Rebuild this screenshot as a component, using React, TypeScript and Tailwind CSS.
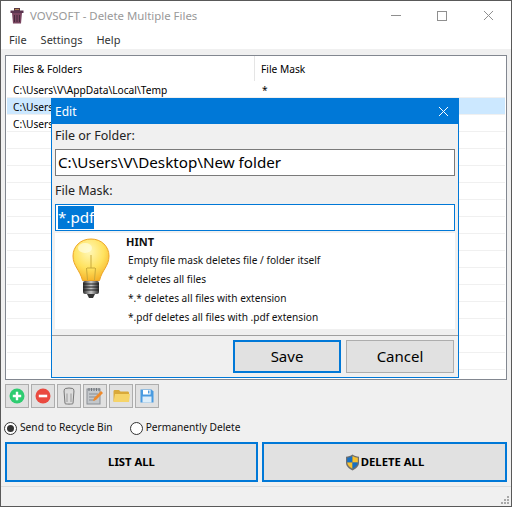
import { X } from "lucide-react";

const rows = [
  { path: "C:\\Users\\V\\AppData\\Local\\Temp", mask: "*" },
  { path: "C:\\Users\\", mask: "", selected: true },
  { path: "C:\\Users\\", mask: "" },
  { path: "", mask: "" },
  { path: "", mask: "" },
];

const hints = [
  "Empty file mask deletes file / folder itself",
  "* deletes all files",
  "*.* deletes all files with extension",
  "*.pdf deletes all files with .pdf extension",
];

const TrashLogo = () => (
  <svg width="14" height="16" viewBox="0 0 14 16">
    <rect x="4.5" y="0.5" width="5" height="2" fill="#b9894f" stroke="#5a3a45" strokeWidth="1" />
    <rect x="0.5" y="2.5" width="13" height="2.5" fill="#5b3550" />
    <path d="M2 5h10l-1 10.5H3z" fill="#7a4560" />
    <path d="M4.5 7v7M7 7v7M9.5 7v7" stroke="#43283c" strokeWidth="1" />
  </svg>
);

const AddIcon = () => (
  <svg width="16" height="16" viewBox="0 0 16 16">
    <circle cx="8" cy="8" r="7.5" fill="#2ecc71" />
    <path d="M8 3.800v8.400M3.800 8h8.400" stroke="#fff" strokeWidth="2.400" />
  </svg>
);

const RemoveIcon = () => (
  <svg width="16" height="16" viewBox="0 0 16 16">
    <circle cx="8" cy="8" r="7.5" fill="#ea4a40" />
    <path d="M3.800 8h8.400" stroke="#fff" strokeWidth="2.600" />
  </svg>
);

const BinIcon = () => (
  <svg width="12" height="18" viewBox="0 0 12 18">
    <ellipse cx="6" cy="3" rx="5" ry="2" fill="#d8d8d8" stroke="#777" />
    <path d="M1 3.500l1 13c0 .8 8 .8 8 0l1-13" fill="#dcdcdc" stroke="#777" />
    <path d="M4 6.500v8.500M8 6.500v8.500" stroke="#999" />
  </svg>
);

const NotesIcon = () => (
  <svg width="18" height="18" viewBox="0 0 18 18">
    <rect x="1" y="2" width="13" height="15" fill="#c4c8cc" stroke="#8b9096" />
    <path d="M3 1v3M5.500 1v3M8 1v3M10.500 1v3M13 1v3" stroke="#6f747a" />
    <path d="M3 7h9M3 10h7M3 13h6" stroke="#868c93" />
    <path d="M7 14l1-3 7-7 2 2-7 7z" fill="#ee8a2c" />
  </svg>
);

const FolderIcon = () => (
  <svg width="17" height="14" viewBox="0 0 17 14">
    <path d="M0.500 2.500c0-1 .5-1.500 1.500-1.500h4l1.500 1.500h7c1 0 1.500.5 1.500 1.500v8.500H.5z" fill="#d9a93a" />
    <path d="M0.500 13l1.500-8h15l-1 8z" fill="#f6d469" />
  </svg>
);

const SaveIcon = () => (
  <svg width="14" height="14" viewBox="0 0 14 14">
    <path d="M.5.5h11l2 2v11H.5z" fill="#4a9be0" />
    <rect x="3" y="1" width="7.500" height="4.500" fill="#ffffff" />
    <rect x="8" y="1.500" width="1.500" height="3" fill="#4a9be0" />
    <rect x="2.500" y="7.500" width="9" height="6" fill="#ddeefa" />
  </svg>
);

const ShieldIcon = () => (
  <svg width="15" height="17" viewBox="0 0 15 17">
    <path d="M7.500.5c2 1.500 4 2 6.500 2.200v6c0 3.500-3 6-6.500 7.800C4 14.700 1 12.200 1 8.700v-6C3.500 2.500 5.500 2 7.500.5z" fill="#6e6e6e" />
    <path d="M7.500 2C5.800 3 4 3.500 2.200 3.700v4.800h5.300z" fill="#1670c4" />
    <path d="M7.500 2c1.700 1 3.500 1.500 5.300 1.700v4.800H7.500z" fill="#f8c22f" />
    <path d="M2.200 8.500h5.300v6.300c-2.700-1.400-5-3.500-5.300-6.300z" fill="#f8c22f" />
    <path d="M12.800 8.500H7.500v6.300c2.700-1.400 5-3.500 5.300-6.300z" fill="#1670c4" />
  </svg>
);

const Bulb = () => (
  <svg width="38" height="63" viewBox="0 0 38 63">
    <defs>
      <radialGradient id="glass" cx="0.45" cy="0.3" r="0.75">
        <stop offset="0" stopColor="#fff8b8" />
        <stop offset="0.55" stopColor="#ffe25e" />
        <stop offset="1" stopColor="#f5ae24" />
      </radialGradient>
      <linearGradient id="screw" x1="0" x2="1" y1="0" y2="0">
        <stop offset="0" stopColor="#2c2c2c" />
        <stop offset="0.5" stopColor="#c9c9c9" />
        <stop offset="1" stopColor="#2c2c2c" />
      </linearGradient>
    </defs>
    <path d="M19 1C8.500 1 1 8.500 1 18c0 10 7 14 9.500 24.500h17C30 32 37 28 37 18 37 8.500 29.500 1 19 1z" fill="url(#glass)" stroke="#eda526" strokeWidth="1" />
    <ellipse cx="13" cy="10" rx="7" ry="5" fill="#fffde0" opacity="0.7" />
    <path d="M19 17v13M15 30h8M14.500 30l1 12M23.500 30l-1 12" stroke="#c9a93a" strokeWidth="1" fill="none" />
    <rect x="11" y="43" width="16" height="13" rx="2" fill="url(#screw)" />
    <path d="M11 46h16M11 49h16M11 52h16" stroke="#1d1d1d" strokeWidth="1" />
    <path d="M15 56h8l-2 4h-4z" fill="#333" />
  </svg>
);

const tools = [AddIcon, RemoveIcon, BinIcon, NotesIcon, FolderIcon, SaveIcon];

export default function App() {
  return (
    <div className="relative w-[512px] h-[507px] flex flex-col overflow-hidden border border-[#595959] bg-[#f0f0f0] text-black font-['Noto_Sans',sans-serif]">
      {/* Title bar */}
      <div className="h-[29px] shrink-0 flex items-center bg-white">
        <div className="ml-[9px] mr-[6px] flex"><TrashLogo /></div>
        <span className="text-[11.4px] text-[#999999]">VOVSOFT - Delete Multiple Files</span>
        <div className="ml-auto flex items-center text-[#8f8f8f]">
          <div className="w-[46px] flex justify-center"><div className="w-[10px] h-px bg-[#8f8f8f]" /></div>
          <div className="w-[46px] flex justify-center"><div className="w-[10px] h-[10px] border border-[#8f8f8f]" /></div>
          <div className="w-[46px] flex justify-center"><X size={17} strokeWidth={1} absoluteStrokeWidth /></div>
        </div>
      </div>

      {/* Menu */}
      <div className="h-[19px] shrink-0 flex items-center gap-[14px] bg-white pl-[8px] pt-[2px] text-[11px] text-[#333]">
        <span>File</span>
        <span>Settings</span>
        <span>Help</span>
      </div>

      {/* Main */}
      <div className="flex-1 flex flex-col px-[4px] pt-[6px]">
        <div className="h-[325px] shrink-0 flex flex-col border border-[#828790] bg-white px-px text-[10.2px]">
          <div className="h-[25px] shrink-0 flex items-center">
            <div className="w-[248px] h-[25px] pt-[3px] flex items-center border-r border-[#e5e5e5] pl-[6px]">Files &amp; Folders</div>
            <div className="pl-[6px] pt-[3px]">File Mask</div>
          </div>
          {rows.map((row, i) => (
            <div key={i} className={`h-[17px] shrink-0 flex items-center border-b border-[#f0f0f0] pt-[4px] ${row.selected ? "bg-[#cce8ff]" : ""}`}>
              <div className="w-[249px] pl-[6px] truncate">{row.path}</div>
              <div className="pl-[6px]">{row.mask}</div>
            </div>
          ))}
          {[0, 1, 2, 3, 4, 5, 6, 7, 8, 9, 10, 11, 12].map((n) => (
            <div key={n} className="h-[17px] shrink-0 border-b border-[#f0f0f0]" />
          ))}
        </div>

        {/* Toolbar */}
        <div className="mt-[4px] flex gap-[2px]">
          {tools.map((Icon, i) => (
            <div key={i} className="w-[24px] h-[24px] flex items-center justify-center border border-[#adadad] bg-[#e1e1e1]">
              <Icon />
            </div>
          ))}
        </div>

        {/* Radios */}
        <div className="mt-[12px] h-[16px] flex items-center text-[10.2px] text-[#111]">
          <span className="-ml-[1px] w-[13px] h-[13px] flex items-center justify-center rounded-full border border-[#333] bg-white">
            <span className="w-[7px] h-[7px] rounded-full bg-[#333]" />
          </span>
          <span className="ml-[3px]">Send to Recycle Bin</span>
          <span className="ml-[17px] w-[13px] h-[13px] rounded-full border border-[#333] bg-white" />
          <span className="ml-[3px]">Permanently Delete</span>
        </div>

        {/* Big buttons */}
        <div className="mt-[6px] flex gap-[4px]">
          <button className="w-[253px] h-[40px] border-2 border-[#0078d7] bg-[#e1e1e1] text-[11.3px] font-bold">LIST ALL</button>
          <button className="w-[245px] h-[40px] flex items-center justify-center gap-[1px] border-2 border-[#0078d7] bg-[#e1e1e1] text-[11.3px] font-bold">
            <ShieldIcon />
            DELETE ALL
          </button>
        </div>

        {/* Status bar */}
        <div className="relative mt-[4px] flex-1 -mx-[4px] border-t border-[#dcdcdc]">
          <div className="absolute right-[2px] bottom-[2px] grid grid-cols-3 gap-[1px]">
            {[0, 1, 2, 3, 4, 5, 6, 7, 8].map((n) => (
              <span key={n} className={`w-[2px] h-[2px] ${[0, 1, 3].includes(n) ? "" : "bg-[#a8a8a8]"}`} />
            ))}
          </div>
        </div>
      </div>

      {/* Edit dialog */}
      <div className="absolute left-[50px] top-[97px] w-[408px] h-[280px] flex flex-col border border-[#0078d7] bg-[#f0f0f0]">
        <div className="h-[25px] shrink-0 flex items-center justify-between bg-[#0078d7] pl-[3px] pr-[6px] text-[12px] text-white">
          <span>Edit</span>
          <X size={17} strokeWidth={1} absoluteStrokeWidth />
        </div>
        <div className="flex-1 flex flex-col px-[3px]">
          <div className="pt-[2px] h-[22px] flex items-center text-[12.5px] text-[#222]">File or Folder:</div>
          <div className="mt-[3px] h-[27px] shrink-0 flex items-center border border-[#7a7a7a] bg-white pl-[2px] text-[15.2px]">C:\Users\V\Desktop\New folder</div>
          <div className="mt-[3px] h-[25px] flex items-center text-[12.5px] text-[#222]">File Mask:</div>
          <div className="h-[27px] shrink-0 flex items-center border border-[#0078d7] bg-white pl-[2px] text-[15.2px]">
            <span className="bg-[#0078d7] text-white">*.pdf</span>
          </div>
          <div className="mt-[2px] h-[96px] shrink-0 flex bg-white">
            <div className="ml-[17px] mt-[5px] shrink-0"><Bulb /></div>
            <div className="ml-[18px] pt-[1px] text-[10.15px] text-[#111]">
              <div className="h-[17px] -ml-[2px] flex items-center text-[11px] font-bold">HINT</div>
              <div className="flex flex-col">
                {hints.map((h) => (
                  <div key={h} className="h-[19px] flex items-center">{h}</div>
                ))}
              </div>
            </div>
          </div>
        </div>
        <div className="h-[42px] shrink-0 flex items-center justify-end gap-[5px] border-t border-[#a0a0a0] pr-[4px] text-[15px]">
          <button className="w-[108px] h-[33px] border-2 border-[#0078d7] bg-[#e1e1e1]">Save</button>
          <button className="w-[108px] h-[33px] border border-[#adadad] bg-[#e1e1e1]">Cancel</button>
        </div>
      </div>
    </div>
  );
}
